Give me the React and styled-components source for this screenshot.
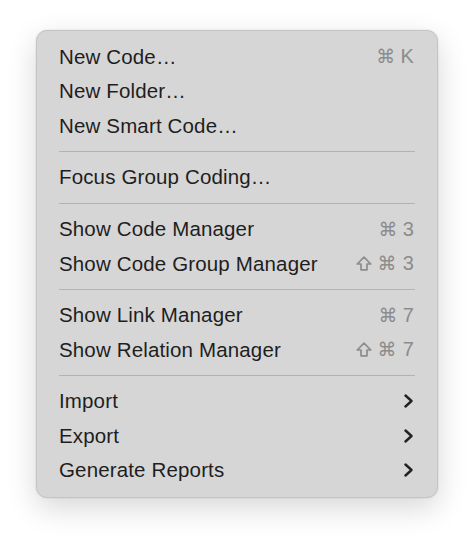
import React from 'react';
import styled, { createGlobalStyle } from 'styled-components';

const GlobalStyle = createGlobalStyle`
  html, body {
    margin: 0;
    padding: 0;
    background: #ffffff;
  }
  body {
    font-family: "Liberation Sans", Arial, sans-serif;
  }
`;

const Page = styled.div`
  width: 474px;
  height: 540px;
  padding: 30px 0 0 36px;
  box-sizing: border-box;
`;

const Menu = styled.div`
  width: 402px;
  height: 468px;
  box-sizing: border-box;
  padding: 8.5px 0 9.5px;
  background: #d6d6d6;
  border: 1px solid #c4c4c4;
  border-radius: 11px;
  box-shadow: 0 10px 30px rgba(0, 0, 0, 0.16), 0 0 2px rgba(0, 0, 0, 0.12);
  display: flex;
  flex-direction: column;
`;

const Row = styled.div`
  height: 34.6px;
  padding: 0 23px 0 22px;
  display: flex;
  align-items: center;
  justify-content: space-between;
  font-size: 20.5px;
  letter-spacing: 0.15px;
  color: #1e1e1e;
`;

const Separator = styled.div`
  height: 17.4px;
  display: flex;
  align-items: center;
  padding: 0 22px;

  &::after {
    content: '';
    flex: 1;
    height: 1px;
    background: #b3b3b3;
  }
`;

const Keys = styled.span`
  display: flex;
  align-items: center;
  gap: ${(p) => (p.$wide ? '6px' : '5px')};
  color: #8c8c8c;
  font-size: 20px;
`;

const Glyph = styled.span`
  font-family: "DejaVu Sans", sans-serif;
  font-size: 19px;
  line-height: 1;
`;

const ShiftIcon = () => (
  <svg width="16" height="15" viewBox="0 0 16 15" fill="none">
    <path
      d="M8 1.2 L14.8 8 L11 8 L11 13.8 L5 13.8 L5 8 L1.2 8 Z"
      stroke="#8c8c8c"
      strokeWidth="1.7"
      strokeLinejoin="round"
    />
  </svg>
);

const Chevron = () => (
  <svg width="11" height="14" viewBox="0 0 11 14" fill="none">
    <path d="M2.5 1.5 L8.5 7 L2.5 12.5" stroke="#222" strokeWidth="2.4" strokeLinecap="round" strokeLinejoin="round" />
  </svg>
);

const Shortcut = ({ shift, keyName }) => (
  <Keys $wide={shift}>
    {shift && <ShiftIcon />}
    <Glyph>⌘</Glyph>
    <span>{keyName}</span>
  </Keys>
);

const groups = [
  [
    { label: 'New Code…', keys: { keyName: 'K' } },
    { label: 'New Folder…' },
    { label: 'New Smart Code…' },
  ],
  [{ label: 'Focus Group Coding…' }],
  [
    { label: 'Show Code Manager', keys: { keyName: '3' } },
    { label: 'Show Code Group Manager', keys: { keyName: '3', shift: true } },
  ],
  [
    { label: 'Show Link Manager', keys: { keyName: '7' } },
    { label: 'Show Relation Manager', keys: { keyName: '7', shift: true } },
  ],
  [
    { label: 'Import', sub: true },
    { label: 'Export', sub: true },
    { label: 'Generate Reports', sub: true },
  ],
];

const App = () => (
  <>
    <GlobalStyle />
    <Page>
      <Menu>
        {groups.map((items, gi) => (
          <React.Fragment key={gi}>
            {gi > 0 && <Separator />}
            {items.map((item) => (
              <Row key={item.label}>
                <span>{item.label}</span>
                {item.keys && <Shortcut {...item.keys} />}
                {item.sub && <Chevron />}
              </Row>
            ))}
          </React.Fragment>
        ))}
      </Menu>
    </Page>
  </>
);

export default App;
